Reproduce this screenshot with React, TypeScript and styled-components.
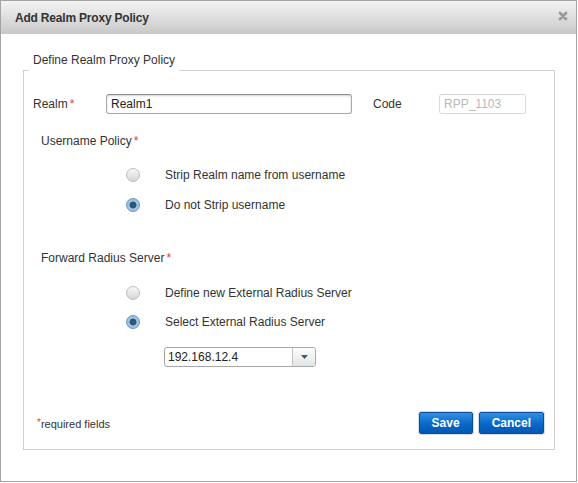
import React from "react";
import styled, { createGlobalStyle } from "styled-components";

const GlobalStyle = createGlobalStyle`
  html, body {
    margin: 0;
    padding: 0;
    background: #ffffff;
  }
  body {
    font-family: "Liberation Sans", Arial, sans-serif;
    font-size: 12px;
    color: #333;
  }
`;

const Dialog = styled.div`
  box-sizing: border-box;
  width: 577px;
  height: 482px;
  border: 1px solid #a3a3a3;
  background: #fff;
  display: flex;
  flex-direction: column;
`;

const Header = styled.div`
  height: 33px;
  flex: 0 0 33px;
  display: flex;
  align-items: center;
  justify-content: space-between;
  padding: 0 8px 0 14px;
  background: linear-gradient(#f4f4f4, #c8c8c8);
`;

const Title = styled.h1`
  margin: 0;
  font-size: 12px;
  font-weight: bold;
  letter-spacing: -0.2px;
  color: #333;
`;

const CloseButton = styled.button`
  border: 0;
  padding: 0;
  background: none;
  width: 10px;
  height: 10px;
  align-self: flex-start;
  margin-top: 10px;
  display: flex;
  cursor: pointer;
`;

const Body = styled.div`
  flex: 1;
  padding: 19px 21px 0 22px;
`;

const TabRow = styled.div`
  display: flex;
  align-items: flex-end;
`;

const TabLine = styled.div<{ $grow?: boolean }>`
  height: 1px;
  background: #cfcfcf;
  flex: ${(p) => (p.$grow ? "1" : "0 0 6px")};
`;

const TabLabel = styled.div`
  padding: 0 4px 4px;
  line-height: 14px;
  font-size: 12px;
  color: #333;
`;

const Panel = styled.div`
  border: 1px solid #cfcfcf;
  border-top: 0;
  height: 379px;
  box-sizing: border-box;
  display: flex;
  flex-direction: column;
  padding: 23px 10px 0 0;
`;

const FieldRow = styled.div`
  display: flex;
  align-items: center;
  height: 20px;
  padding-left: 9px;
`;

const Label = styled.label<{ $width: number; $gap?: number }>`
  width: ${(p) => p.$width}px;
  margin-left: ${(p) => p.$gap || 0}px;
  flex: 0 0 auto;
  color: #333;
`;

const Star = styled.span`
  color: #e8343a;
  margin-left: 2px;
`;

const TextInput = styled.input<{ $width: number; $muted?: boolean }>`
  box-sizing: border-box;
  width: ${(p) => p.$width}px;
  height: 20px;
  padding: 0 4px;
  border: 1px solid ${(p) => (p.$muted ? "#dcdcdc" : "#a8a8a8")};
  border-top-color: ${(p) => (p.$muted ? "#d6d6d6" : "#8e8e8e")};
  border-radius: 3px;
  box-shadow: ${(p) => (p.$muted ? "none" : "inset 0 1px 2px rgba(0,0,0,0.18)")};
  font: 12px "Liberation Sans", Arial, sans-serif;
  color: #222;
  outline: none;
  &::placeholder {
    color: #b9b9b9;
  }
`;

const SectionTitle = styled.div<{ $top: number }>`
  margin-top: ${(p) => p.$top}px;
  padding-left: 17px;
  line-height: 16px;
  color: #333;
`;

const RadioGroup = styled.div<{ $top: number; $gap: number }>`
  margin-top: ${(p) => p.$top}px;
  padding-left: 102px;
  display: flex;
  flex-direction: column;
  gap: ${(p) => p.$gap}px;
`;

const RadioRow = styled.label`
  display: flex;
  align-items: center;
  height: 16px;
  gap: 25px;
  color: #333;
`;

const Radio = styled.input`
  appearance: none;
  -webkit-appearance: none;
  margin: 0;
  box-sizing: border-box;
  width: 14px;
  height: 14px;
  border-radius: 50%;
  border: 1px solid #bdbdbd;
  background: linear-gradient(#f8f8f8, #d5d5d5);
  &:checked {
    border-color: #6b93b6;
    background: radial-gradient(circle, #2c5777 0 3.2px, #9ec2e0 3.8px);
  }
`;

const SelectBox = styled.div`
  margin: 17px 0 0 140px;
  box-sizing: border-box;
  width: 152px;
  height: 20px;
  display: flex;
  border: 1px solid #a8a8a8;
  border-radius: 3px;
  background: #fff;
  overflow: hidden;
`;

const SelectValue = styled.div`
  flex: 1;
  padding-left: 3px;
  line-height: 18px;
  color: #222;
`;

const SelectArrow = styled.div`
  width: 22px;
  border-left: 1px solid #c4c4c4;
  background: linear-gradient(#fdfdfd, #e4e4e4);
  display: flex;
  align-items: center;
  justify-content: center;
`;

const Footer = styled.div`
  margin-top: 45px;
  display: flex;
  align-items: center;
  justify-content: space-between;
  padding-left: 13px;
`;

const Required = styled.div`
  font-size: 11px;
  color: #333;
  span {
    color: #f04848;
    font-size: 10px;
    vertical-align: 2px;
  }
`;

const Buttons = styled.div`
  display: flex;
  gap: 6px;
`;

const Button = styled.button`
  box-sizing: border-box;
  height: 22px;
  padding: 0 12px;
  border: 1px solid #0b4f96;
  border-radius: 2px;
  background: linear-gradient(#2f8fe4, #0a68c6 55%, #0058b3);
  box-shadow: 0 0 0 1px #d5dbe2;
  color: #fff;
  font: bold 12px "Liberation Sans", Arial, sans-serif;
  cursor: pointer;
`;

const App = () => {
  return (
    <>
      <GlobalStyle />
      <Dialog>
        <Header>
          <Title>Add Realm Proxy Policy</Title>
          <CloseButton aria-label="Close">
            <svg width="10" height="10" viewBox="0 0 10 10">
              <path d="M2 2 L8 8 M8 2 L2 8" stroke="#999" strokeWidth="2.8" strokeLinecap="round" />
            </svg>
          </CloseButton>
        </Header>
        <Body>
          <TabRow>
            <TabLine />
            <TabLabel>Define Realm Proxy Policy</TabLabel>
            <TabLine $grow />
          </TabRow>
          <Panel>
            <FieldRow>
              <Label $width={73}>
                Realm<Star>*</Star>
              </Label>
              <TextInput $width={246} defaultValue="Realm1" />
              <Label $width={66} $gap={21}>
                Code
              </Label>
              <TextInput $width={87} $muted placeholder="RPP_1103" readOnly />
            </FieldRow>

            <SectionTitle $top={19}>
              Username Policy<Star>*</Star>
            </SectionTitle>
            <RadioGroup $top={18} $gap={14}>
              <RadioRow>
                <Radio type="radio" name="userPolicy" />
                Strip Realm name from username
              </RadioRow>
              <RadioRow>
                <Radio type="radio" name="userPolicy" defaultChecked />
                Do not Strip username
              </RadioRow>
            </RadioGroup>

            <SectionTitle $top={37}>
              Forward Radius Server<Star>*</Star>
            </SectionTitle>
            <RadioGroup $top={19} $gap={13}>
              <RadioRow>
                <Radio type="radio" name="radius" />
                Define new External Radius Server
              </RadioRow>
              <RadioRow>
                <Radio type="radio" name="radius" defaultChecked />
                Select External Radius Server
              </RadioRow>
            </RadioGroup>

            <SelectBox>
              <SelectValue>192.168.12.4</SelectValue>
              <SelectArrow>
                <svg width="7" height="4" viewBox="0 0 7 4">
                  <path d="M0 0 H7 L3.5 4 Z" fill="#3b5c7c" />
                </svg>
              </SelectArrow>
            </SelectBox>

            <Footer>
              <Required>
                <span>*</span>required fields
              </Required>
              <Buttons>
                <Button>Save</Button>
                <Button>Cancel</Button>
              </Buttons>
            </Footer>
          </Panel>
        </Body>
      </Dialog>
    </>
  );
};

export default App;
